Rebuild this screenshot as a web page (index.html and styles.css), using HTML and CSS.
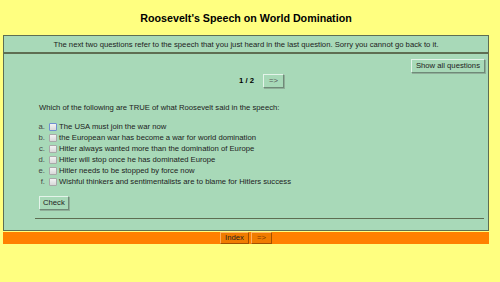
FILE: index.html
```html
<!DOCTYPE html>
<html>
<head>
<meta charset="UTF-8">
<title>Roosevelt's Speech on World Domination</title>
<link rel="stylesheet" href="styles.css">
</head>
<body>
<div class="page">
<h1 class="title">Roosevelt's Speech on World Domination</h1>
<div class="notice">The next two questions refer to the speech that you just heard in the last question. Sorry you cannot go back to it.</div>
<div class="main">
<div class="toolbar">
<button class="btn">Show all questions</button>
</div>
<div class="pager">
<span></span>
<b class="pagenum">1 / 2</b>
<span><button class="btn next">=&gt;</button></span>
</div>
<p class="question">Which of the following are TRUE of what Roosevelt said in the speech:</p>
<ol class="options">
<li><span class="letter">a.</span><input type="checkbox" class="box focus"><span>The USA must join the war now</span></li>
<li><span class="letter">b.</span><input type="checkbox" class="box"><span>the European war has become a war for world domination</span></li>
<li><span class="letter">c.</span><input type="checkbox" class="box"><span>Hitler always wanted more than the domination of Europe</span></li>
<li><span class="letter">d.</span><input type="checkbox" class="box"><span>Hitler will stop once he has dominated Europe</span></li>
<li><span class="letter">e.</span><input type="checkbox" class="box"><span>Hitler needs to be stopped by force now</span></li>
<li><span class="letter">f.</span><input type="checkbox" class="box"><span>Wishful thinkers and sentimentalists are to blame for Hitlers success</span></li>
</ol>
<div class="actions"><button class="btn">Check</button></div>
<div class="rule"></div>
</div>
<div class="navbar">
<button class="btn orange">Index</button>
<button class="btn orange arrow">=&gt;</button>
</div>
</div>
</body>
</html>
```
FILE: styles.css
```css
body {
	margin: 0;
	background: #ffff80;
	font-family: "Liberation Sans", Arial, Helvetica, sans-serif;
	color: #222;
}
.page {
	width: 486px;
	padding: 0 3px;
}
.title {
	margin: 0;
	padding-top: 12px;
	height: 23px;
	font-size: 10.7px;
	line-height: 12px;
	text-align: center;
	color: #000;
}
.notice {
	background: #a8d9b8;
	border: 1px solid #5e6e52;
	height: 16px;
	line-height: 17px;
	font-size: 7.7px;
	text-align: center;
	color: #1c1c1c;
}
.main {
	background: #a8d9b8;
	border: 1px solid #5e6e52;
	padding: 5px 3px 11px 3px;
}
.btn {
	font-family: "Liberation Sans", Arial, Helvetica, sans-serif;
	font-size: 7.7px;
	color: #222;
	background: #a8d9b8;
	height: 14px;
	padding: 0 4px;
	margin: 0;
	border: 1px solid;
	border-color: #e4f4ea #6f8a78 #6f8a78 #e4f4ea;
	box-shadow: 1px 1px 0 #8fae98;
	line-height: 12px;
}
.toolbar {
	display: flex;
	justify-content: flex-end;
}
.pager {
	display: grid;
	grid-template-columns: 1fr auto 1fr;
	align-items: center;
	height: 15px;
	font-size: 7.7px;
	color: #000;
}
.pagenum {
	padding-left: 1px;
}
.next {
	margin-left: 9px;
	padding: 0 5px;
	color: #555;
}
.question {
	margin: 14px 0 0 32px;
	font-size: 7.7px;
	line-height: 11px;
	color: #1c1c1c;
}
.options {
	list-style: none;
	margin: 8px 0 0 0;
	padding: 0;
	font-size: 7.7px;
	line-height: 11px;
	color: #1c1c1c;
}
.options li {
	display: flex;
	align-items: center;
	height: 11px;
}
.letter {
	width: 42px;
	text-align: right;
	padding-right: 4px;
	box-sizing: border-box;
	color: #444;
}
.box {
	appearance: none;
	width: 8px;
	height: 8px;
	margin: 0 2px 0 0;
	border: 1px solid #a8a8a8;
	border-radius: 1px;
	background: linear-gradient(#f4f4f4, #d8d8d8);
}
.box.focus {
	border-color: #6f8fd0;
}
.actions {
	display: flex;
	margin: 9px 0 0 32px;
}
.actions .btn {
	padding: 0 3px;
}
.rule {
	margin: 8px 1px 0 28px;
	border-top: 1px solid #5e6e52;
	height: 0;
}
.navbar {
	margin-top: 1px;
	background: #ff8000;
	height: 12px;
	display: flex;
	justify-content: center;
	gap: 2px;
}
.orange {
	background: #f07c00;
	height: 12px;
	line-height: 10px;
	color: #222;
	border-color: #ffb060 #a05000 #a05000 #ffb060;
	box-shadow: none;
	padding: 0 4px;
}
.arrow {
	color: #7a3a00;
	padding: 0 5px;
}
```
